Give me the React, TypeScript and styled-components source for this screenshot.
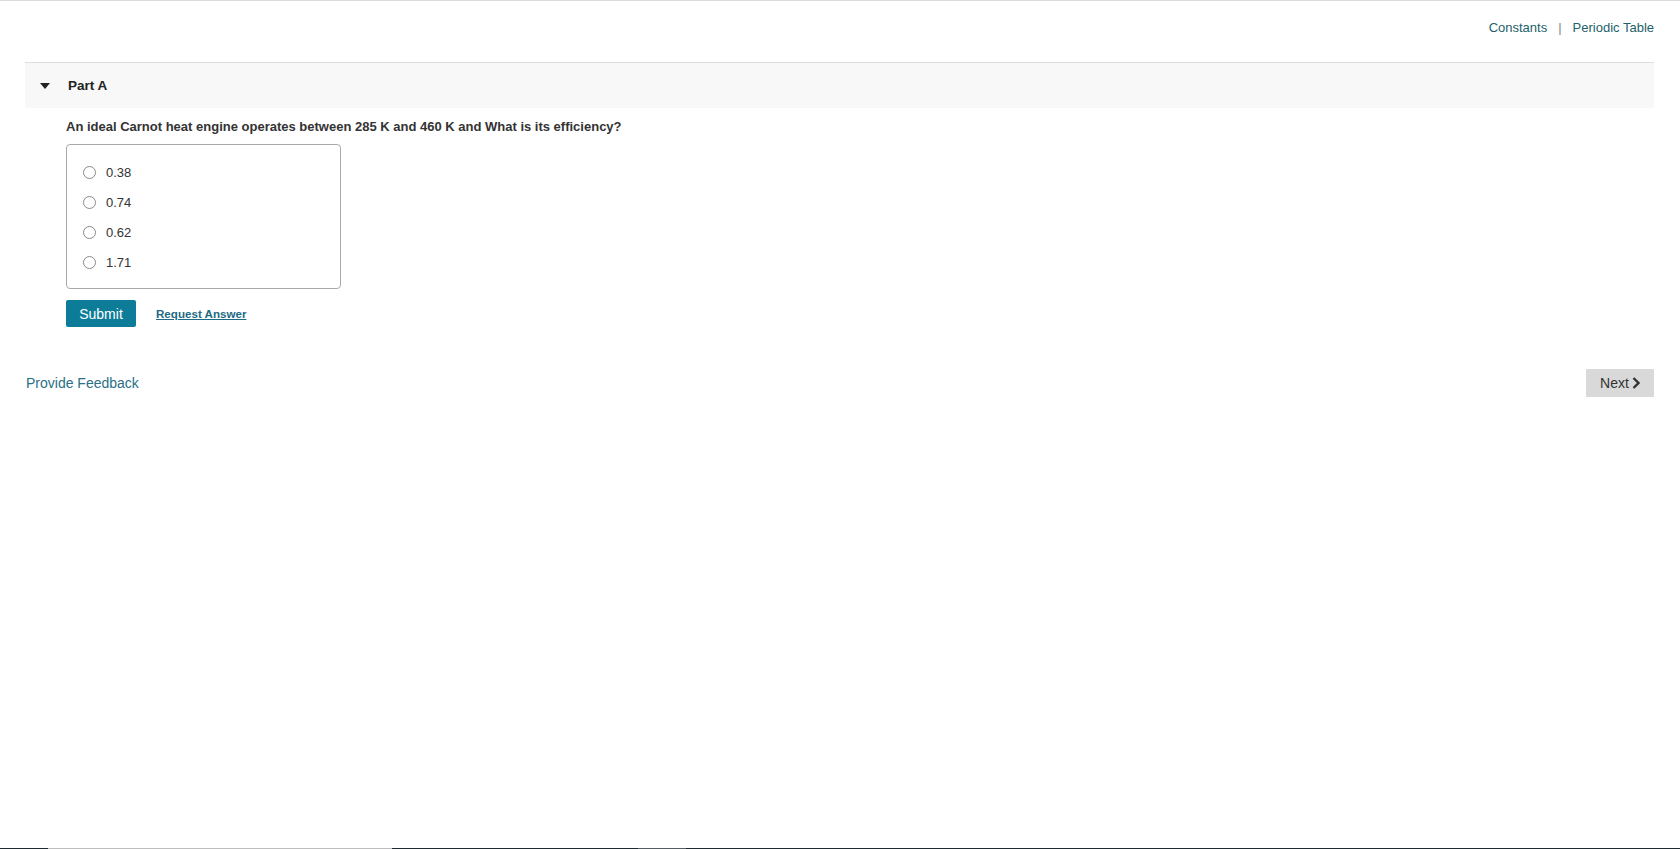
import React, { useState } from "react";
import styled, { createGlobalStyle } from "styled-components";

const GlobalStyle = createGlobalStyle`
  html, body {
    margin: 0;
    padding: 0;
    background: #fff;
    font-family: "Liberation Sans", Arial, sans-serif;
    color: #333;
  }
`;

const options = ["0.38", "0.74", "0.62", "1.71"];

function App() {
  const [picked, setPicked] = useState<string | null>(null);

  return (
    <Page>
      <GlobalStyle />
      <Content>
        <TopLinks>
          <TopLink>Constants</TopLink>
          <Divider>|</Divider>
          <TopLink>Periodic Table</TopLink>
        </TopLinks>

        <PartHeader>
          <Caret viewBox="0 0 10 6">
            <path d="M0 0h10L5 6z" fill="#222" />
          </Caret>
          <PartTitle>Part A</PartTitle>
        </PartHeader>

        <PartBody>
          <Question>
            An ideal Carnot heat engine operates between 285 K and 460 K and What is
            its efficiency?
          </Question>

          <ChoiceBox>
            {options.map((o) => (
              <Choice key={o}>
                <Radio
                  type="radio"
                  name="partA"
                  checked={picked === o}
                  onChange={() => setPicked(o)}
                />
                <span>{o}</span>
              </Choice>
            ))}
          </ChoiceBox>

          <Actions>
            <SubmitButton>Submit</SubmitButton>
            <RequestLink>Request Answer</RequestLink>
          </Actions>
        </PartBody>

        <FooterRow>
          <FeedbackLink>Provide Feedback</FeedbackLink>
          <NextButton>
            Next
            <Chevron viewBox="0 0 8 12">
              <path d="M1.5 1l5 5-5 5" fill="none" stroke="#333" strokeWidth="2.4" />
            </Chevron>
          </NextButton>
        </FooterRow>
      </Content>

      <TaskStrip>
        <StripPart w={48} tone="#1f2a30" />
        <StripPart w={344} tone="#bdbdbd" />
        <StripPart w={246} tone="#1f2a30" />
        <StripPart w={48} tone="#555d62" />
        <StripPart grow tone="#1f2a30" />
      </TaskStrip>
    </Page>
  );
}

const Page = styled.div`
  min-height: 100vh;
  display: flex;
  flex-direction: column;
  border-top: 1px solid #dcdcdc;
  box-sizing: border-box;
`;

const Content = styled.div`
  padding: 0 26px 0 25px;
`;

const TopLinks = styled.div`
  display: flex;
  justify-content: flex-end;
  align-items: center;
  gap: 11px;
  height: 52px;
  font-size: 13px;
`;

const TopLink = styled.a`
  color: #245f6b;
  cursor: pointer;
`;

const Divider = styled.span`
  color: #888;
`;

const PartHeader = styled.div`
  display: flex;
  align-items: center;
  height: 46px;
  margin-top: 9px;
  background: #f8f8f8;
  border-top: 1px solid #dedede;
  box-sizing: border-box;
  padding-left: 15px;
`;

const Caret = styled.svg`
  width: 10px;
  height: 6px;
`;

const PartTitle = styled.span`
  margin-left: 18px;
  font-size: 13.5px;
  font-weight: bold;
  color: #222;
`;

const PartBody = styled.div`
  padding-left: 41px;
`;

const Question = styled.p`
  margin: 11px 0 0;
  font-size: 13px;
  font-weight: bold;
  color: #333;
`;

const ChoiceBox = styled.div`
  margin-top: 10px;
  width: 275px;
  height: 145px;
  box-sizing: border-box;
  border: 1px solid #aaa;
  border-radius: 4px;
  padding: 12px 0 0 16px;
  display: flex;
  flex-direction: column;
`;

const Choice = styled.label`
  display: flex;
  align-items: center;
  height: 30px;
  font-size: 13px;
  color: #333;
  cursor: pointer;
`;

const Radio = styled.input`
  appearance: none;
  width: 13px;
  height: 13px;
  margin: 0 10px 0 0;
  border: 1px solid #8a8a8a;
  border-radius: 50%;
  background: #fff;
  &:checked {
    background: radial-gradient(circle, #0f7c99 40%, #fff 45%);
  }
`;

const Actions = styled.div`
  display: flex;
  align-items: center;
  margin-top: 11px;
  gap: 20px;
`;

const SubmitButton = styled.button`
  width: 70px;
  height: 27px;
  border: none;
  border-radius: 2px;
  background: #0d7c99;
  color: #fff;
  font-family: inherit;
  font-size: 14px;
  cursor: pointer;
`;

const RequestLink = styled.a`
  font-size: 11.6px;
  font-weight: bold;
  color: #1d6b85;
  text-decoration: underline;
  cursor: pointer;
`;

const FooterRow = styled.div`
  display: flex;
  justify-content: space-between;
  align-items: center;
  margin-top: 42px;
  padding-left: 1px;
`;

const FeedbackLink = styled.a`
  font-size: 14px;
  color: #2b6f86;
  cursor: pointer;
`;

const NextButton = styled.button`
  display: flex;
  align-items: center;
  justify-content: center;
  gap: 3px;
  width: 68px;
  height: 28px;
  border: none;
  border-radius: 1px;
  background: #d9d9d9;
  color: #333;
  font-family: inherit;
  font-size: 14px;
  cursor: pointer;
`;

const Chevron = styled.svg`
  width: 8px;
  height: 12px;
`;

const TaskStrip = styled.div`
  margin-top: auto;
  display: flex;
  height: 1px;
`;

const StripPart = styled.div<{ w?: number; grow?: boolean; tone: string }>`
  width: ${(p) => (p.w ? `${p.w}px` : "auto")};
  flex: ${(p) => (p.grow ? 1 : "none")};
  background: ${(p) => p.tone};
`;

export default App;
